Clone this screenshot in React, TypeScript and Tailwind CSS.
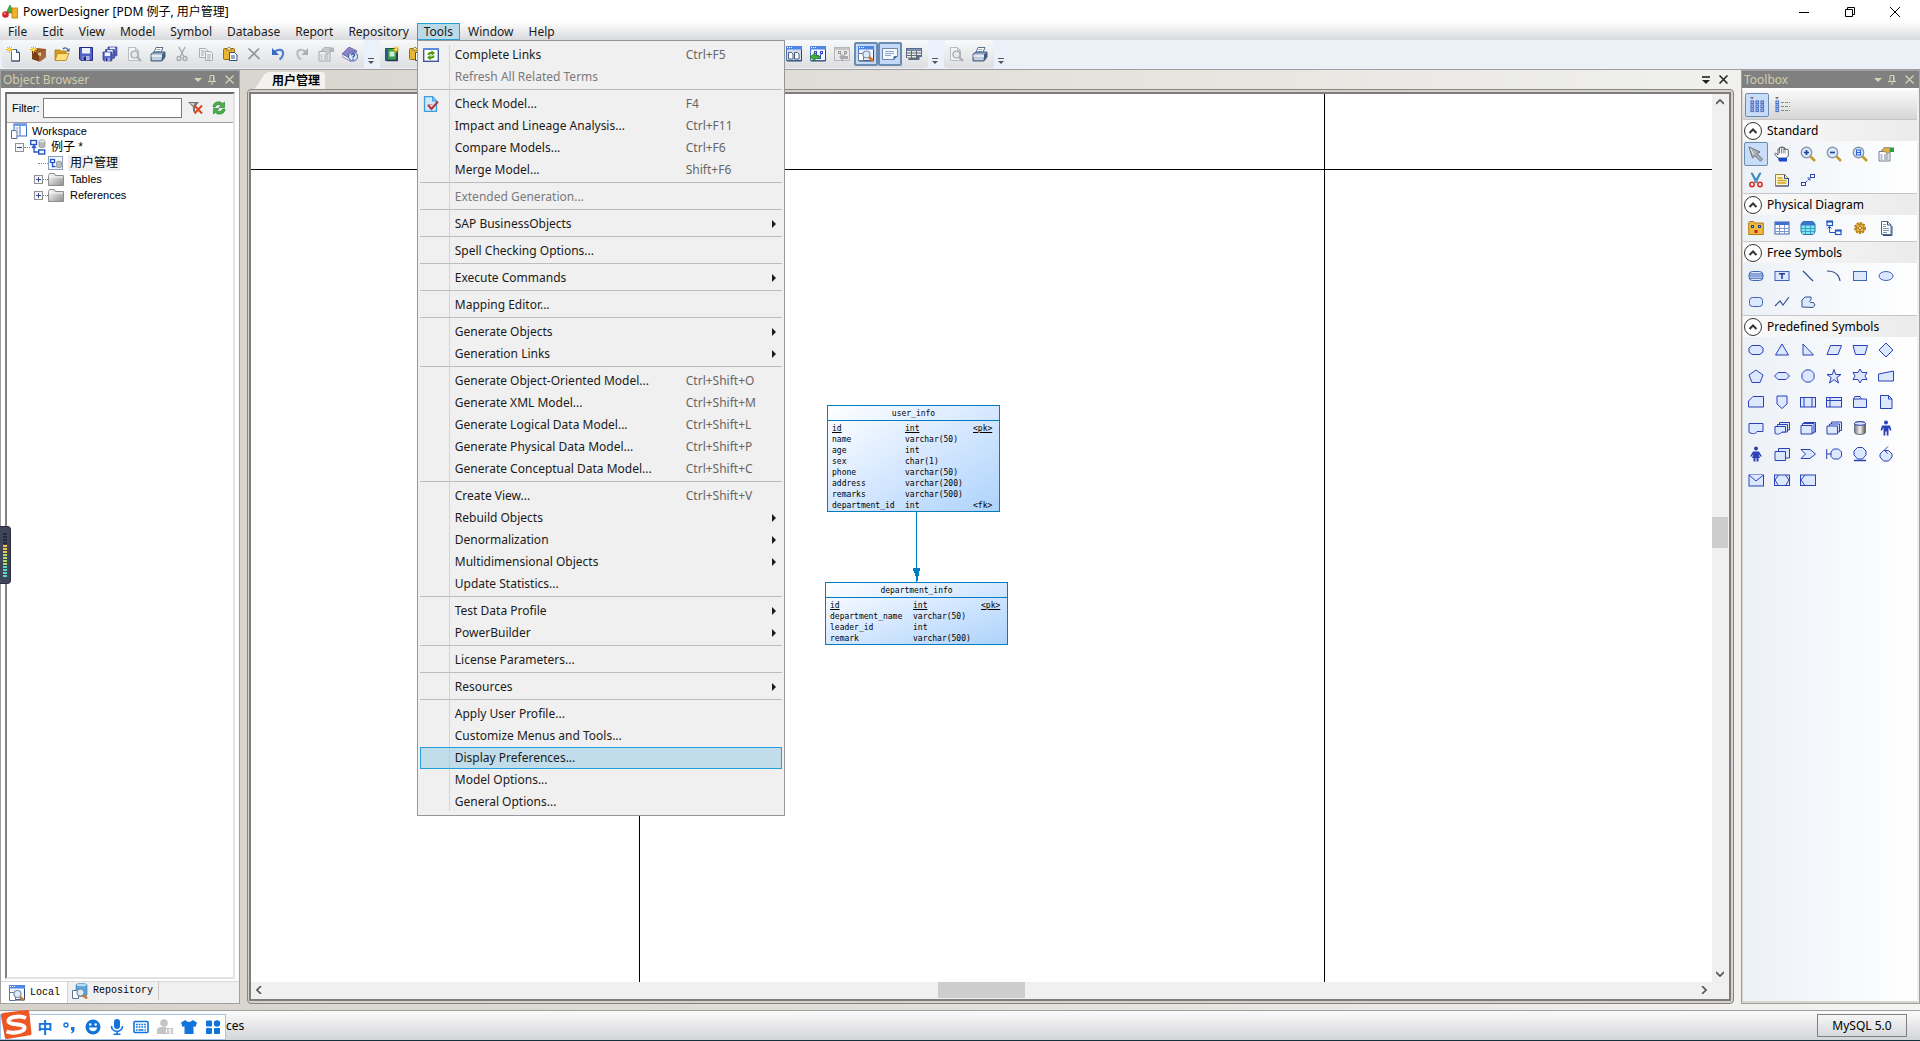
import React from "react";

/* ---------- icon helper ---------- */
const B = "#2a41b8";
const L = "#dbe8ff";

const icons: Record<string, React.ReactNode> = {
  newDoc: (
    <>
      <path d="M5.5 3.500h5l3 3v8.500h-8z" fill="#fff" stroke="#5b7596" />
      <path d="M10.500 3.500v3h3" fill="#cfdcec" stroke="#2c4a72" />
      <path d="M13.500 7v8h-8" fill="none" stroke="#2c4a72" />
      <Spark />
    </>
  ),
  newBox: (
    <>
      <path d="M2 5l5-3 9 1v8l-6 4.500-8-2.500z" fill="#9a5a2a" />
      <path d="M2 5l7 2.500v8l-7-2.500z" fill="#7a3f18" />
      <path d="M9 7.500l7-4v7.500l-6 4.500H9z" fill="#a9683a" />
      <path d="M7.500 7l3.500-.8v4l-2.500-1z" fill="#e9c590" />
      <Spark />
    </>
  ),
  open: (
    <>
      <path d="M1 4h5l1 1h5v9H1z" fill="#d99a1c" stroke="#a87410" strokeWidth=".7" />
      <path d="M3.500 7.500H15l-3 7H1z" fill="#ffdf7a" stroke="#b8811a" strokeWidth=".8" />
      <path d="M9 3c2-2 4-1 5 .8" fill="none" stroke="#3b5e8f" strokeWidth="1.200" />
      <path d="M15.500 2v3.500h-3.500z" fill="#3b5e8f" />
    </>
  ),
  save: <Disk />,
  saveAll: (
    <>
      <g transform="translate(5 0) scale(.68)"><Disk /></g>
      <g transform="translate(2.500 2.500) scale(.68)"><Disk /></g>
      <g transform="translate(0 5) scale(.68)"><Disk /></g>
    </>
  ),
  preview: (
    <>
      <path d="M2.500 1.500h7l3 3v10h-10z" fill="#f2f3f4" stroke="#b9bcc0" />
      <path d="M9.500 1.500v3h3" fill="none" stroke="#b9bcc0" />
      <circle cx="8.500" cy="8.500" r="3.500" fill="#e6e8ea" stroke="#a2a6ab" strokeWidth="1.200" />
      <path d="M11 11l4 4" stroke="#b0b0b0" strokeWidth="2.400" />
    </>
  ),
  print: (
    <>
      <path d="M6 1.500h7l-2.500 6h-7z" fill="#fff" stroke="#56708f" />
      <path d="M6.500 3.500h4M6 5.500h4" stroke="#9bb0c8" />
      <path d="M1 8l3-2h11v5l-3 4H1z" fill="#8ea4bf" stroke="#2d4868" strokeWidth=".8" />
      <path d="M1.500 8.500H12v3H1.500z" fill="#e3ebf4" />
      <path d="M2 13h9" stroke="#fff" />
      <path d="M12 8.500l3-2.500v5l-3 3.500z" fill="#3e5c80" />
    </>
  ),
  cut: (
    <g fill="none" stroke="#a4a7ab" strokeWidth="1.300">
      <path d="M5 1l4.500 9M11 1L6.500 10" />
      <circle cx="5" cy="12.500" r="2" />
      <circle cx="11" cy="12.500" r="2" />
    </g>
  ),
  copy: (
    <g fill="#f0f1f2" stroke="#a9acb0">
      <path d="M1.500 2.500h6l2 2v7h-8z" />
      <path d="M7.500 5.500h5l2 2v7h-7z" />
      <path d="M3 5h4M3 7h3M3 9h3M9 9h4M9 11h4M9 13h3" fill="none" />
    </g>
  ),
  paste: (
    <>
      <rect x="1.500" y="2.500" width="11" height="11" rx="1" fill="#e9b732" stroke="#9b6c0d" />
      <path d="M4 4V2.500h1.500C6 .8 8 .8 8.500 2.500H10V4z" fill="#fff3b8" stroke="#8a6416" strokeWidth=".8" />
      <path d="M7.500 6.500h5l2.500 2.500v5.500H7.500z" fill="#fff" stroke="#2f4f84" />
      <path d="M9 10h4M9 12h4" stroke="#2f4f84" />
    </>
  ),
  del: <path d="M2.500 2.500l11 10.500M13 2.500L2.500 13" stroke="#909397" strokeWidth="1.700" fill="none" />,
  undo: (
    <>
      <path d="M4 6.500C8 2 14 3.500 13 8.500c-.5 2.500-2 4-3.500 5" fill="none" stroke="#4f7fd6" strokeWidth="2.200" />
      <path d="M2 2v7h7z" fill="#3769c6" />
    </>
  ),
  redo: (
    <>
      <path d="M12 6.500C8 2 2.500 3.500 3.500 8.500c.5 2.500 2 4 3.500 5" fill="none" stroke="#bbbec2" strokeWidth="2.200" />
      <path d="M14 2v7H7.500z" fill="#a9adb1" />
    </>
  ),
  props: <Props c="#a4a6a9" f="#efefef" h="#c7c9cb" g="#b4b6b8" />,
  propsColor: <Props c="#6e7f94" f="#fff" h="#e0ae3f" g="#2f9a4b" />,
  helpBook: (
    <>
      <path d="M0 8l7-7 8 4-6 8z" fill="#8a83c4" stroke="#5b5398" strokeWidth=".7" />
      <path d="M0 8l9 5v2.500L0 10.500z" fill="#fff" stroke="#5b5398" strokeWidth=".7" />
      <circle cx="11" cy="10.500" r="4.500" fill="#dce6f8" stroke="#3b5ca6" />
      <path d="M9.500 9.200c0-2 3-2 3-.2 0 1.200-1.500 1.200-1.500 2.500M11 12.500v1.200" stroke="#2744a0" fill="none" strokeWidth="1.300" />
    </>
  ),
  greenBook: (
    <>
      <path d="M1.500 2.500h12v12h-12z" fill="#3c9a52" stroke="#1d5a30" />
      <path d="M1.500 2.500h2.500v12H1.500z" fill="#2a5f8a" />
      <path d="M5.500 5.500h5v5h-5z" fill="#c9efcf" />
      <path d="M13 3v11.500H3" stroke="#1e3556" fill="none" strokeWidth="1.500" />
      <g transform="translate(8.500 0)"><Spark /></g>
    </>
  ),
  winDocs: (
    <>
      <Win />
      <path d="M2.500 6.500h3l1.500 1.500v5H2.500zM8.500 6.500h3l1.500 1.500v5H8.500z" fill="#fff" stroke="#4b607c" />
    </>
  ),
  winLayout: (
    <>
      <Win light />
      <g fill="#dfe4ff" stroke="#3544c0"><rect x="4.500" y="5.500" width="2" height="2" /><rect x="10.500" y="5.500" width="2" height="2" /><rect x="8.500" y="10.500" width="2" height="2" /><path d="M6 8l3 3M11 8l-1 3" /></g>
      <path d="M0 11l5-4v2.500h4v3H5V15z" fill="#3fae3a" stroke="#1a6f1c" strokeWidth=".7" />
    </>
  ),
  winLayoutGray: (
    <>
      <rect x=".5" y="1.500" width="15" height="13" fill="#e9e9e9" stroke="#b5b7b9" />
      <path d="M1 2h14v2H1z" fill="#c4c6c8" />
      <g fill="#eee" stroke="#999"><rect x="4.500" y="5.500" width="2" height="2" /><rect x="10.500" y="5.500" width="2" height="2" /><path d="M6 8l3 3M11 8l-2 3" /></g>
      <path d="M5 11l4-3v2h5v3H9v2.500z" fill="#aaa" />
    </>
  ),
  winFind: (
    <>
      <Win light />
      <path d="M.5 7.500h5v7h-5z" fill="#fff" stroke="#6b7c92" />
      <circle cx="8.500" cy="8.500" r="3.500" fill="#dceaf9" stroke="#7c8da3" strokeWidth="1.200" />
      <path d="M11 11l4 4" stroke="#d57a20" strokeWidth="2.600" />
    </>
  ),
  note: (
    <>
      <path d="M.5 2.500h15v8h-3v3h-12z" fill="#f5f9ff" stroke="#7187a8" />
      <path d="M15.500 10.500h-4v3z" fill="#3d5b8a" />
      <path d="M3 5.500h9M3 7.500h9M3 9.500h6" stroke="#8fa6c8" />
    </>
  ),
  tableNote: (
    <>
      <path d="M0 2h16v9h-2.500v3H2.500v-2H0z" fill="#5b6b82" />
      <path d="M1 3h14v1.500H1z" fill="#7f98bc" />
      <g fill="#f1ecdc"><path d="M1 5h4v1.500H1zM6 5h4v1.500H6zM11 5h4v1.500h-4zM1 7.500h4V9H1zM6 7.500h4V9H6zM11 7.500h4V9h-4zM1 10h4v1.500H1zM6 10h4v1.500H6z" /></g>
    </>
  ),
  filterOff: (
    <>
      <path d="M0 2h11L7 7v6l-2-2V7z" fill="#6f7276" />
      <path d="M2 3h5L5.500 6z" fill="#c8cacc" />
      <path d="M6.500 5.500l7.500 8M14 5.500l-7.500 8" stroke="#e2421e" strokeWidth="2" />
    </>
  ),
  refresh: (
    <g fill="#4bb04a" stroke="#1c7a2d" strokeWidth=".6">
      <path d="M2 7C2 1.500 9 .5 11.500 3.500L13.500 2v5.500H8l1.800-2C8 4 5 4.500 4.500 7z" />
      <path d="M14 9c0 5.500-7 6.500-9.500 3.500L2.500 14V8.500H8l-1.800 2C8 12 11 11.500 11.500 9z" />
    </g>
  ),
  workspace: (
    <>
      <rect x="3" y="1" width="12.500" height="12" fill="#fff" stroke="#3c6fd0" />
      <path d="M2.500 .5h13.500v2.500H2.500z" fill="#6f9be6" />
      <path d="M9 3v10" stroke="#3c6fd0" />
      <path d="M4.500 5h3M4.500 7h3M4.500 9h3" stroke="#8aa4c8" />
      <path d="M.5 7.500h4l1.500 2v6H.5z" fill="#fff" stroke="#53709a" />
    </>
  ),
  pdm: (
    <>
      <rect x=".7" y="1.500" width="5.800" height="4" fill="#fff" stroke="#2356c8" strokeWidth="1.400" />
      <path d="M4 6v7h4.500M2 9l2-2.500L6 9" stroke="#2356c8" fill="none" strokeWidth="1.300" />
      <path d="M9 2c0-1.500 6-1.500 6 0v5.500c0 1.500-6 1.500-6 0z" fill="#b9babb" stroke="#868788" strokeWidth=".7" />
      <ellipse cx="12" cy="2.200" rx="3" ry="1" fill="#e6e6e6" />
      <rect x="8.700" y="11" width="6" height="4" fill="#fff" stroke="#2356c8" strokeWidth="1.400" />
    </>
  ),
  diagram: (
    <>
      <rect x=".5" y="1.500" width="14" height="13" fill="#f4f8ff" stroke="#8d9fbc" />
      <rect x="2.500" y="4.500" width="4" height="3" fill="#fff" stroke="#2356c8" strokeWidth="1.300" />
      <path d="M4.500 8v3.500h3" stroke="#2356c8" fill="none" strokeWidth="1.300" />
      <path d="M8.500 7c0-1 5-1 5 0v5c0 1-5 1-5 0z" fill="#bbb" stroke="#7e7e7e" strokeWidth=".6" />
    </>
  ),
  folder: (
    <>
      <path d="M.5 4.500l1-2h5l1 2h8v10H.5z" fill="url(#folderGrad)" stroke="#8e8e8e" />
      <path d="M1 6h14" stroke="#fafafa" />
    </>
  ),
  localTab: (
    <>
      <Win light />
      <path d="M.5 7.500h4l2 2v6h-6z" fill="#fff" stroke="#5a7699" />
      <circle cx="8.500" cy="9" r="3.500" fill="#dceaf9" stroke="#7c8da3" strokeWidth="1.200" />
      <path d="M11 12l4 3.500" stroke="#c9792a" strokeWidth="2.400" />
    </>
  ),
  repoTab: (
    <>
      <path d="M4 2c0-2 11-2 11 0v10c0 2-11 2-11 0z" fill="#58a6dc" stroke="#3277ae" strokeWidth=".6" />
      <ellipse cx="9.500" cy="2" rx="5" ry="1.300" fill="#b8dcf5" />
      <path d="M.5 7.500h4l2 2v6h-6z" fill="#fff" stroke="#5a7699" />
      <circle cx="8.500" cy="9.500" r="3.500" fill="#dceaf9" stroke="#7c8da3" strokeWidth="1.200" />
      <path d="M11 12l4 3.500" stroke="#c9792a" strokeWidth="2.400" />
    </>
  ),
  links: (
    <>
      <rect x=".7" y="1.700" width="14.600" height="12.600" fill="#fff" stroke="#3d5a94" strokeWidth="1.400" />
      <path d="M0 2h16" stroke="#5b8be0" strokeWidth="2" />
      <path d="M4.500 8C4.500 5.500 6 4.800 8.500 4.800V3.300L12 6 8.500 8.700V7C7 7 6.500 7.200 6.500 8z" fill="#4f9a12" />
      <path d="M11.500 8.500c0 2.500-1.500 3.200-4 3.200v1.600L4 10.500l3.500-2.700v1.700c1.500 0 2-.2 2-1z" fill="#4f9a12" />
    </>
  ),
  check: (
    <>
      <path d="M1.500 .7h8l4 4v10.600h-12z" fill="#cfe8fa" stroke="#3f9bdc" strokeWidth="1.300" />
      <path d="M9.500 1v4h4" fill="#8cc8f0" stroke="#3f9bdc" />
      <path d="M5 9l3.500 4L15 5.500" stroke="#b8323c" strokeWidth="2" fill="none" />
      <path d="M4.500 8.500h5" stroke="#d98a90" />
    </>
  ),
  gridSmall: (
    <>
      <path d="M1 0h4L3 2.500z" fill="#777" />
      {[5, 9, 13].map((y) => [3, 8, 13].map((x) => <rect key={`${x}-${y}`} x={x - 1} y={y - 1} width="2.500" height="2.500" fill="#f3c3cf" stroke="#4d77c8" strokeWidth="1.200" />))}
    </>
  ),
  gridList: (
    <>
      <path d="M1 0h4L3 2.500z" fill="#777" />
      {[5, 9, 13].map((y) => <g key={y}><rect x="2" y={y - 1} width="2.500" height="2.500" fill="#dce9ff" stroke="#4d77c8" strokeWidth="1.200" /><path d={`M7 ${y + 0.5}h9`} stroke="#888" strokeDasharray="3 1" /></g>)}
    </>
  ),
  pointer: (
    <>
      <path d="M1 1l11 5-3.200 1.600 5.700 5.400-2 2.200-5.500-5.500L4.500 12z" fill="#aeb1b5" stroke="#62666c" strokeWidth=".9" />
      <path d="M2.500 2.500l3 6" stroke="#eee" />
    </>
  ),
  hand: (
    <>
      <path d="M4 12L.8 8.500c-.5-1 .7-1.500 1.400-1L4 9V3.500c0-1 1.500-1 1.500 0V2c0-1 1.700-1 1.700 0v-.5c0-1 1.700-1 1.700 0V2c0-1 1.700-1 1.700 0v1.500c0-1 1.700-1 1.700 0V4c.3-1 2-1 2 .2V10l-2 2z" fill="#fff" stroke="#333" strokeWidth=".8" />
      <path d="M5.500 3v4.500M7.400 2v5.500M9.200 2v5.500M11 3v4.500" stroke="#555" strokeWidth=".7" />
      <path d="M4 12h9v3.500H5z" fill="#1746d0" />
    </>
  ),
  zoomIn: <Mag><path d="M4 6.500h5M6.500 4v5" stroke="#1f4396" strokeWidth="1.700" /></Mag>,
  zoomOut: <Mag><path d="M4 6.500h5" stroke="#1f4396" strokeWidth="1.700" /></Mag>,
  zoomFit: <Mag><path d="M4.500 4h4v5h-4zM4.500 6.500h4" stroke="#2b5ee0" strokeWidth="1.100" fill="none" /></Mag>,
  cutColor: (
    <>
      <path d="M3 1h1.500l5 9L8 11zM13 1h-1.500L6.500 10 8 11z" fill="#3e93d0" stroke="#2a6fa8" strokeWidth=".6" />
      <circle cx="4" cy="12.500" r="2.200" fill="none" stroke="#e02a1a" strokeWidth="1.500" />
      <circle cx="12" cy="12.500" r="2.200" fill="none" stroke="#e02a1a" strokeWidth="1.500" />
    </>
  ),
  noteYellow: (
    <>
      <path d="M1.500 2.500h9l4 4v7.500h-13z" fill="#fff7d0" stroke="#a48322" />
      <path d="M10.500 2.500v4h4M14.500 6v8h-13" fill="none" stroke="#2a49a0" />
      <path d="M3.500 6h5M3.500 8.500h9M3.500 11h9" stroke="#d3a21c" strokeWidth="1.300" />
    </>
  ),
  linkTool: (
    <g fill="#fff" stroke={B}><rect x="1.500" y="10.500" width="4" height="3" /><rect x="10.500" y="2.500" width="4" height="3" /><path d="M6 10l4-4M7.500 6h2.500v2.500" fill="none" strokeDasharray="2 1" /></g>
  ),
  pkg: (
    <>
      <path d="M.7 3l1-1.500h4l1 1.500h8.600v11.500H.7z" fill="#f0b93a" stroke="#a5700f" strokeWidth=".9" />
      <path d="M3 5h3v3H3zM10 5h3v3h-3z" fill="#24439a" /><path d="M6.500 10h3v3h-3z" fill="#c2222e" /><path d="M4 6h1v1H4zM11 6h1v1h-1z" fill="#5be0e6" />
    </>
  ),
  tbl: (
    <>
      <rect x="1" y="2" width="14" height="12" fill="#fff" stroke="#3f62ae" /><path d="M1 2h14v3H1z" fill="#3f6fd0" />
      <path d="M1 8.500h14M1 11.500h14M5.500 5v9M10.500 5v9" stroke="#7c98cf" />
    </>
  ),
  view: (
    <>
      <path d="M1 4l2-2.500h10L15 4v8l-2 2.500H3L1 12z" fill="#7ee8f0" stroke="#2f6fb4" /><path d="M1 4l2-2.500h10L15 4v1.500H1z" fill="#3a76cc" />
      <path d="M1 8.500h14M1 11.500h14M5.500 5v9M10.500 5v9" stroke="#3f9fc8" />
    </>
  ),
  ref: (
    <>
      <rect x="1" y="1.500" width="5.500" height="4" fill="#fff" stroke="#2356c8" strokeWidth="1.200" /><rect x="9.500" y="10.500" width="5.500" height="4" fill="#fff" stroke="#2356c8" strokeWidth="1.200" />
      <path d="M.5 1.500h6.500M9 10.500h6.500" stroke="#2356c8" strokeWidth="1.800" /><path d="M3.500 6v6.500H9M1.500 8.500l2-2 2 2" stroke="#2356c8" fill="none" />
    </>
  ),
  gear: (
    <>
      <circle cx="8" cy="8" r="5.200" fill="#f3c24e" stroke="#b07a14" strokeWidth="1.600" strokeDasharray="2.200 1.200" /><circle cx="8" cy="8" r="4" fill="#f3c24e" stroke="#b07a14" strokeWidth=".8" />
      <circle cx="8" cy="8" r="1.500" fill="#fff" stroke="#a06c10" /><path d="M8 4v2M8 10v2M4 8h2M10 8h2" stroke="#a06c10" />
    </>
  ),
  file: (
    <>
      <path d="M3.500 1.500h6l3.500 3.500v9.500H3.500z" fill="#fff" stroke="#4e678c" /><path d="M9.500 1.500V5H13" fill="none" stroke="#2d4d7d" />
      <path d="M5 4.500h3M5 6.500h3M5 8.500h6M5 10.500h6M5 12.500h4" stroke="#8596b0" /><path d="M14 6v9.500H5" fill="none" stroke="#2d4d7d" />
    </>
  ),
  fRoundTitle: <g fill={L} stroke="#3f63b5"><rect x="1" y="3.500" width="14" height="9" rx="3.500" /><path d="M1 6h14M1 8h14M1 10.200h14" /></g>,
  fText: <><rect x="1" y="3.500" width="14" height="9" fill={L} stroke="#3f63b5" /><path d="M5 5.800h6M8 5.500v5.500" stroke="#1f3c90" strokeWidth="1.500" /></>,
  fLine: <path d="M3 3l10 10" stroke="#33508f" strokeWidth="1.200" />,
  fArc: <path d="M1 3c7 0 12 3 13 10" stroke="#33508f" strokeWidth="1.200" fill="none" />,
  fRect: <rect x="1.500" y="3.500" width="13" height="9" fill={L} stroke="#3f63b5" />,
  fEllipse: <ellipse cx="8" cy="8" rx="7" ry="4.500" fill={L} stroke="#3f63b5" />,
  fRound: <rect x="1.500" y="3.500" width="13" height="9" rx="3" fill={L} stroke="#3f63b5" />,
  fPoly: <path d="M1 12l5-5 3 4 6-8" stroke="#33508f" strokeWidth="1.200" fill="none" />,
  fClosed: <path d="M2 13V6l3-3h6v3c-2 1-2 2 0 2.500h2.500L15 11l-2 2.500z" fill={L} stroke="#33508f" />,
  s1: <path d="M4 3.500h8L15 6v4l-3 2.500H4L1 10V6z" fill={L} stroke={B} />,
  s2: <path d="M8 2l6.500 11h-13z" fill={L} stroke={B} />,
  s3: <path d="M3 2v11h10.500z" fill={L} stroke={B} />,
  s4: <path d="M4.500 3.500h11l-3.500 9H1z" fill={L} stroke={B} />,
  s5: <path d="M1 3.500h14.500l-2.500 9H3.500z" fill={L} stroke={B} />,
  s6: <path d="M8 1l7 7-7 7-7-7z" fill={L} stroke={B} />,
  s7: <path d="M8 2l7 5-3 7.500H4L1 7z" fill={L} stroke={B} />,
  s8: <path d="M4 4.500h8L15.500 8 12 11.500H4L.5 8z" fill={L} stroke={B} />,
  s9: <path d="M5.500 2h5L14 5.500v5L10.500 14h-5L2 10.500v-5z" fill={L} stroke={B} />,
  s10: <path d="M8 1.500l1.700 5h5.300l-4.200 3 1.700 5.500L8 11.700 3.500 15l1.700-5.500L1 6.500h5.300z" fill={L} stroke={B} />,
  s11: <path d="M8 1l2 3.500h5L13 8l2 3.500h-5L8 15l-2-3.500H1L3 8 1 4.500h5z" fill={L} stroke={B} />,
  s12: <path d="M.5 6l15-3v10H.5z" fill={L} stroke={B} />,
  s13: <path d="M5 2.500h10.500v10.500H.5V7z" fill={L} stroke={B} />,
  s14: <path d="M3 2h10v8l-5 4.500L3 10z" fill={L} stroke={B} />,
  s15: <g fill={L} stroke={B}><rect x=".5" y="3.500" width="15" height="9.500" /><path d="M4 3.500V13M12 3.500V13" /></g>,
  s16: <g fill={L} stroke={B}><rect x=".5" y="3.500" width="15" height="9.500" /><path d="M.5 6.500h15M4 3.500V13" /></g>,
  s17: <path d="M1.500 13.500V5L3 2.500h5L9.500 5h5v8.500zM1.500 5h8" fill={L} stroke={B} />,
  s18: <path d="M2.500 1.500h8l3.500 3.500v9.500H2.500zM10.500 1.500V5H14" fill={L} stroke={B} />,
  s19: <path d="M1 3.500h14v8H9c-1 2-3 3-8 1z" fill={L} stroke={B} />,
  s20: <g fill={L} stroke={B}><path d="M5.500 2.500h10V10h-10z" /><path d="M3.500 4.500h10V12h-10z" /><path d="M1 6.500h10.500V12H8c-2 2.500-5 2.500-7 1.500z" /></g>,
  s21: <g fill={L} stroke={B}><path d="M4 2.500h11.500V12H4z" /><path d="M2.500 3.500H14V13H2.500z" /><path d="M1 5.500h11v8.500H1z" /></g>,
  s22: <g fill={L} stroke={B}><path d="M5.500 2h10v8.500h-10z" /><path d="M3.500 4h10v8h-10z" /><path d="M1 6h10.500v8H1z" /></g>,
  s23: <><path d="M2.500 3.500c0-2.500 11-2.500 11 0v9c0 2.500-11 2.500-11 0z" fill="url(#cylGrad)" stroke="#666b85" /><ellipse cx="8" cy="3.500" rx="5.500" ry="1.800" fill="#dde4f7" stroke={B} /></>,
  s24: <><circle cx="8" cy="2.500" r="2" fill={B} /><path d="M4 5.500h8l1.500 5H12L10.500 7.500v8H8.700v-4H7.300v4H5.500v-8L4 10.500H2.500z" fill={B} /></>,
  s25: <><circle cx="8" cy="2.500" r="2" fill={B} /><path d="M5 5.500h6l3 5h-1.500L10.500 8l1.500 4h-1.500v3.500h-2V12h-1v3.500h-2V12H4l1.500-4-2 2.500H2z" fill={B} /></>,
  s26: <g fill={L} stroke={B}><path d="M4.500 2.500h11V12h-11z" /><path d="M1 5.500h10.500v9H1z" /></g>,
  s27: <path d="M1 3.500h9L15.500 8 10 12.500H1L5.500 8z" fill={L} stroke={B} />,
  s28: <g fill={L} stroke={B}><path d="M.7 3v10M1 8h4" /><path d="M7.500 3h5L15.500 6v4.500L12.500 13h-5L5 10.500V6z" /></g>,
  s29: <g fill={L} stroke={B}><path d="M5.500 1.500h5L14 5v4l-3.500 4h-5L2 9V5z" /><path d="M2 14.500h12" strokeWidth="1.500" /></g>,
  s30: <g fill={L} stroke={B}><path d="M5.500 4.500h5L14 8v3l-3.500 4h-5L2 11V8z" /><path d="M10 .5L6.500 4l3 3.500" fill="none" /></g>,
  s31: <g fill={L} stroke={B}><rect x="1" y="3" width="14.500" height="11" /><path d="M1 3l7 6 7.500-6" /></g>,
  s32: <g fill={L} stroke={B}><rect x=".5" y="3" width="15" height="10.500" /><path d="M4.500 3L1 8l3.500 5.500M11.500 3L15 8l-3.500 5.500" /></g>,
  s33: <g fill={L} stroke={B}><rect x=".5" y="3" width="15" height="10.500" /><path d="M5 3L1 8l4 5.500" /></g>,
};

function Spark() {
  return (
    <g stroke="#f0b90b" strokeWidth="1">
      <path d="M3.500 0v7M0 3.500h7M1 1l5 5M6 1L1 6" />
      <rect x="2.500" y="2.500" width="2" height="2" fill="#fff6b0" stroke="none" />
    </g>
  );
}
function Disk() {
  return (
    <>
      <path d="M1.500 1.500h13v13H3l-1.500-1.500z" fill="#5261c4" stroke="#232b82" />
      <path d="M4 2h8v5.500H4z" fill="#eef2ff" />
      <path d="M4.500 10h7v4.500h-7z" fill="#aab4e6" />
      <path d="M5.500 10.500H8v4H5.500z" fill="#1e2568" />
    </>
  );
}
function Props({ c, f, h, g }: { c: string; f: string; h: string; g: string }) {
  return (
    <>
      <path d="M1 5.500h11v9.500H1z" fill={f} stroke={c} />
      <path d="M2.500 9h2M6 9h4.500M2.500 11h2M6 11h4.500M2.500 13h2M6 13h4.500" stroke={c} />
      <path d="M3 5l3-3.500h6v4.500L9 8 7.500 6z" fill={h} stroke={c} strokeWidth=".7" />
      <path d="M12 1.500h4V6h-4z" fill={g} />
    </>
  );
}
function Win({ light }: { light?: boolean }) {
  return (
    <>
      <rect x=".5" y=".5" width="15" height="14" fill={light ? "#f3f7ff" : "#d4dceb"} stroke="#4f75b8" />
      <path d="M0 0h16v3.500H0z" fill="#4f86e6" />
      <path d="M1 1.500h1M3 1.500h1M5 1.500h1" stroke="#fff" />
      <path d="M15.500 4v11H1" stroke="#2c4770" fill="none" />
    </>
  );
}
function Mag({ children }: { children: React.ReactNode }) {
  return (
    <>
      <circle cx="6.500" cy="6.500" r="5.200" fill="#dbe9fb" stroke="#8a97a9" strokeWidth="1.400" />
      {children}
      <path d="M10.500 10.500l4.500 4.500" stroke="#c79a2a" strokeWidth="2.600" />
    </>
  );
}

function Icon({ n }: { n: string }) {
  return (
    <svg viewBox="0 0 16 16" className="h-4 w-4 shrink-0" aria-hidden="true">
      {icons[n]}
    </svg>
  );
}

/* ---------- data ---------- */
type Item = { t: string; k?: string; sub?: boolean; off?: boolean; icon?: string; hot?: boolean };
const menuGroups: Item[][] = [
  [{ t: "Complete Links", k: "Ctrl+F5", icon: "links" }, { t: "Refresh All Related Terms", off: true }],
  [
    { t: "Check Model...", k: "F4", icon: "check" },
    { t: "Impact and Lineage Analysis...", k: "Ctrl+F11" },
    { t: "Compare Models...", k: "Ctrl+F6" },
    { t: "Merge Model...", k: "Shift+F6" },
  ],
  [{ t: "Extended Generation...", off: true }],
  [{ t: "SAP BusinessObjects", sub: true }],
  [{ t: "Spell Checking Options..." }],
  [{ t: "Execute Commands", sub: true }],
  [{ t: "Mapping Editor..." }],
  [{ t: "Generate Objects", sub: true }, { t: "Generation Links", sub: true }],
  [
    { t: "Generate Object-Oriented Model...", k: "Ctrl+Shift+O" },
    { t: "Generate XML Model...", k: "Ctrl+Shift+M" },
    { t: "Generate Logical Data Model...", k: "Ctrl+Shift+L" },
    { t: "Generate Physical Data Model...", k: "Ctrl+Shift+P" },
    { t: "Generate Conceptual Data Model...", k: "Ctrl+Shift+C" },
  ],
  [
    { t: "Create View...", k: "Ctrl+Shift+V" },
    { t: "Rebuild Objects", sub: true },
    { t: "Denormalization", sub: true },
    { t: "Multidimensional Objects", sub: true },
    { t: "Update Statistics..." },
  ],
  [{ t: "Test Data Profile", sub: true }, { t: "PowerBuilder", sub: true }],
  [{ t: "License Parameters..." }],
  [{ t: "Resources", sub: true }],
  [
    { t: "Apply User Profile..." },
    { t: "Customize Menus and Tools..." },
    { t: "Display Preferences...", hot: true },
    { t: "Model Options..." },
    { t: "General Options..." },
  ],
];

const menus = ["File", "Edit", "View", "Model", "Symbol", "Database", "Report", "Repository", "Tools", "Window", "Help"];

const sections = [
  { title: "Standard", icons: ["pointer", "hand", "zoomIn", "zoomOut", "zoomFit", "propsColor", "cutColor", "noteYellow", "linkTool"] },
  { title: "Physical Diagram", icons: ["pkg", "tbl", "view", "ref", "gear", "file"] },
  { title: "Free Symbols", icons: ["fRoundTitle", "fText", "fLine", "fArc", "fRect", "fEllipse", "fRound", "fPoly", "fClosed"] },
  { title: "Predefined Symbols", icons: Array.from({ length: 33 }, (_, i) => `s${i + 1}`) },
];

type Row = [string, string, string];
const userRows: Row[] = [
  ["id", "int", "<pk>"],
  ["name", "varchar(50)", ""],
  ["age", "int", ""],
  ["sex", "char(1)", ""],
  ["phone", "varchar(50)", ""],
  ["address", "varchar(200)", ""],
  ["remarks", "varchar(500)", ""],
  ["department_id", "int", "<fk>"],
];
const deptRows: Row[] = [
  ["id", "int", "<pk>"],
  ["department_name", "varchar(50)", ""],
  ["leader_id", "int", ""],
  ["remark", "varchar(500)", ""],
];

/* ---------- pieces ---------- */
function ToolsMenu() {
  return (
    <div role="menu" aria-label="Tools" className="absolute top-full left-0 z-30 w-[368px] border border-[#979797] bg-[#f0f0f0] px-[2px] pt-[3px] pb-[2px]">
      <div className="absolute top-[4px] bottom-[4px] left-[31px] w-px bg-[#d5d5d5]" />
      {menuGroups.map((g, gi) => (
        <div key={gi} className={gi > 0 ? "relative mt-px border-t border-[#bdbdbd] pt-[3px]" : "relative"}>
          {g.map((m) => (
            <button
              key={m.t}
              role="menuitem"
              disabled={m.off}
              className={`flex h-[22px] w-full items-center border text-left whitespace-nowrap ${m.hot ? "border-[#26a0da] bg-[#91c9e6]/50" : "border-transparent"} ${m.off ? "text-[#7a7a7a]" : "text-[#1b1b1b]"}`}
            >
              <span className="flex w-[34px] justify-start pl-[2px]">{m.icon && <Icon n={m.icon} />}</span>
              <span className="w-[231px]">{m.t}</span>
              <span className="flex-1 text-[#666]">{m.k}</span>
              {m.sub && (
                <svg viewBox="0 0 4 8" className="mr-[5px] h-2 w-1"><path d="M0 0l4 4-4 4z" fill="#1b1b1b" /></svg>
              )}
            </button>
          ))}
        </div>
      ))}
    </div>
  );
}

function ToolButton({ n, on }: { n: string; on?: boolean }) {
  return (
    <button aria-label={n} className={`flex h-6 w-6 shrink-0 items-center justify-center ${on ? "rounded-[2px] border-2 border-[#6a8cb0] bg-[#c3d9f7]" : ""}`}>
      <Icon n={n} />
    </button>
  );
}

function Overflow() {
  return (
    <button aria-label="Toolbar options" className="flex h-full w-[13px] shrink-0 items-end justify-center bg-[#eaf1fb] pb-[3px]">
      <svg viewBox="0 0 6 7" className="h-[7px] w-[6px]"><path d="M0 .5h6" stroke="#555" /><path d="M0 3h6L3 6z" fill="#555" /></svg>
    </button>
  );
}

function Group({ items, on = [] }: { items: string[]; on?: string[] }) {
  return (
    <div className="flex h-[28px] shrink-0 items-center">
      <div className="flex h-full items-center rounded-[3px] bg-linear-to-b from-[#f8f9fa] to-[#dcdee1] pr-[2px]">
        {items.map((n, i) => <ToolButton key={i} n={n} on={on.includes(n)} />)}
      </div>
      <Overflow />
    </div>
  );
}

function PanelTitle({ children }: { children: string }) {
  return (
    <div className="flex h-[17px] shrink-0 items-center bg-[#808080] pr-[2px] pl-[2px] text-[12px] leading-[17px] text-[#d0ccae]">
      <h2 className="flex-1">{children}</h2>
      <button aria-label="Panel menu" className="flex w-[14px] justify-center"><svg viewBox="0 0 8 4" className="h-1 w-2"><path d="M0 0h8L4 4z" fill="#d8d4b8" /></svg></button>
      <button aria-label="Pin panel" className="flex w-[14px] justify-center"><svg viewBox="0 0 8 10" className="h-[10px] w-2" fill="none" stroke="#d8d4b8"><path d="M2 6V.5h4V6M5.500.5V6M0 6.500h8M4 7v3" /></svg></button>
      <button aria-label="Close panel" className="ml-[2px] flex w-4 justify-center"><svg viewBox="0 0 9 9" className="h-[9px] w-[9px]"><path d="M.5.5l8 8M8.500.5l-8 8" stroke="#d8d4b8" strokeWidth="1.200" /></svg></button>
    </div>
  );
}

function Entity({ title, rows, className, cols }: { title: string; rows: Row[]; className: string; cols: [string, string] }) {
  return (
    <table className={`absolute table-fixed border-separate border-spacing-0 border border-[#007cc3] bg-linear-to-br from-white via-[#d6e8ff] to-[#add3fa] text-left font-[DejaVu_Sans_Mono,monospace] text-[8px] leading-[11px] text-black ${className}`}>
      <colgroup><col className={cols[0]} /><col className={cols[1]} /><col /></colgroup>
      <thead><tr><th colSpan={3} className="h-[15px] border-b border-[#007cc3] text-center font-normal">{title}</th></tr></thead>
      <tbody>
        {rows.map((r, i) => (
          <tr key={r[0]}>
            {r.map((c, j) => (
              <td key={j} className={`h-[11px] whitespace-nowrap ${j === 0 ? "pl-[4px]" : ""} ${i === 0 ? "h-[13px] pt-[2px] underline" : ""}`}>{c}</td>
            ))}
          </tr>
        ))}
      </tbody>
    </table>
  );
}

function Expander({ open }: { open?: boolean }) {
  return (
    <button aria-label={open ? "Collapse" : "Expand"} className="h-[9px] w-[9px] shrink-0">
      <svg viewBox="0 0 9 9" className="h-[9px] w-[9px]"><rect x=".5" y=".5" width="8" height="8" fill="#f7f7f7" stroke="#919191" /><path d={open ? "M2 4.500h5" : "M2 4.500h5M4.500 2v5"} stroke="#33488f" /></svg>
    </button>
  );
}

function Chevron({ d, label }: { d: string; label: string }) {
  return (
    <button aria-label={label} className="flex h-4 w-4 shrink-0 items-center justify-center">
      <svg viewBox="0 0 8 8" className="h-2 w-2"><path d={d} fill="none" stroke="#555" strokeWidth="1.700" /></svg>
    </button>
  );
}

function ImeBar() {
  const c = "#1174dd";
  const cls = "h-4 w-4";
  return (
    <div className="absolute top-[3px] left-0 flex h-[26px] w-[226px] items-center border border-[#a5c3ea] bg-white">
      <svg viewBox="0 0 32 32" className="-mt-[4px] -ml-px h-8 w-8 shrink-0">
        <path d="M3 4L27 1c1 0 2 .5 2.200 2L31.500 24c0 1-.5 2-1.500 2.300L7 30c-1 0-2-.5-2.200-1.500L1 7C1 5 2 4.200 3 4z" fill="#ee5724" />
        <path d="M26 9C19 6 7.500 8 8.500 12.500c1 4 15 1.500 16 6 .8 4.500-11.500 6.500-18 4" fill="none" stroke="#fff" strokeWidth="4" />
      </svg>
      <div className="ml-[5px] flex flex-1 items-center justify-between pr-[4px]">
        <button className="w-4 text-[15px] leading-none font-bold text-[#1174dd]">中</button>
        <svg viewBox="0 0 16 16" className={cls}><circle cx="5" cy="6" r="2" fill="none" stroke={c} strokeWidth="1.400" /><path d="M10 8h3.500v3c0 1.500-1 2.500-3 3.500l-.5-1c1-.7 1.500-1.500 1.300-2.300H10z" fill={c} /></svg>
        <svg viewBox="0 0 16 16" className={cls}><circle cx="8" cy="8" r="7.500" fill={c} /><path d="M4 8.500h8c0 5-8 5-8 0z" fill="#fff" /><circle cx="5.300" cy="5.500" r="1.200" fill="#fff" /><circle cx="10.700" cy="5.500" r="1.200" fill="#fff" /></svg>
        <svg viewBox="0 0 16 16" className={cls}><rect x="5" y="0" width="6" height="10" rx="3" fill={c} /><path d="M2.500 7c0 7 11 7 11 0M8 12v3M4.500 15.200h7" fill="none" stroke={c} strokeWidth="1.600" /></svg>
        <svg viewBox="0 0 16 16" className={cls}><rect x="1" y="2.500" width="14" height="11" rx="1" fill="none" stroke={c} strokeWidth="1.600" /><path d="M3 5.500h10M3 8h10" stroke={c} strokeWidth="1.500" strokeDasharray="1.700 1" /><path d="M3 11h1.500M5.500 11h5M11.500 11h1.500" stroke={c} strokeWidth="1.300" /></svg>
        <svg viewBox="0 0 16 16" className={cls}><circle cx="7" cy="4" r="3.800" fill="#c4c4c4" /><path d="M0 15V11c0-2 2-3 4-3h5v7z" fill="#c4c4c4" /><rect x="8" y="9" width="8" height="6" fill="#c4c4c4" /><path d="M9.500 10v4M14.500 10.500h-2.500v1.500h2v2h-2.500" stroke="#fff" fill="none" /></svg>
        <svg viewBox="0 0 16 16" className={cls}><path d="M4.500 1C6 3.500 10 3.500 11.500 1L16 3.500 14.500 8l-2-.8V15h-9V7.200l-2 .8L0 3.500z" fill={c} /></svg>
        <svg viewBox="0 0 16 16" className={cls}><g fill={c}><rect x="1" y="1.500" width="6" height="6" rx="1" /><circle cx="12" cy="4.500" r="3.200" /><rect x="1" y="9" width="6" height="6" rx="1" /><rect x="9" y="9" width="6" height="6" rx="1" /></g></svg>
      </div>
    </div>
  );
}

export default function App() {
  return (
    <div className="flex h-screen min-h-[860px] flex-col overflow-hidden bg-[#ecf0f7] font-['Noto_Sans','Noto_Sans_CJK_SC',sans-serif] text-[12px] leading-[16px] text-[#1b1b1b]">
      <svg className="absolute h-0 w-0" aria-hidden="true">
        <defs>
          <linearGradient id="folderGrad" x1="0" y1="0" x2="1" y2="1"><stop offset="0" stopColor="#fff" /><stop offset="1" stopColor="#8f8f8f" /></linearGradient>
          <linearGradient id="cylGrad"><stop offset="0" stopColor="#777" /><stop offset=".5" stopColor="#f4f4f4" /><stop offset="1" stopColor="#555" /></linearGradient>
        </defs>
      </svg>

      {/* title bar */}
      <header className="flex h-[23px] shrink-0 items-center bg-white pl-[2px] text-black">
        <svg viewBox="0 0 16 16" className="h-4 w-4"><path d="M8 1l4 8H4z" fill="#3fae3f" stroke="#1d7a24" strokeWidth=".6" /><circle cx="3.500" cy="10.500" r="3.300" fill="#d8232e" /><circle cx="2.700" cy="9.600" r="1" fill="#f4a0a0" /><rect x="10" y="4" width="5.500" height="10" fill="#f3b328" stroke="#c07a10" strokeWidth=".8" /></svg>
        <h1 className="ml-[5px] flex-1">PowerDesigner [PDM 例子, 用户管理]</h1>
        <div className="flex h-full items-center">
          <button aria-label="Minimize" className="flex w-[46px] justify-center"><svg viewBox="0 0 10 10" className="h-[10px] w-[10px]"><path d="M0 5.500h10" stroke="#000" /></svg></button>
          <button aria-label="Restore" className="flex w-[45px] justify-center"><svg viewBox="0 0 10 10" className="h-[10px] w-[10px]" fill="none" stroke="#000"><path d="M.5 2.500h7v7h-7zM2.500 2.500v-2h7v7h-2" /></svg></button>
          <button aria-label="Close" className="mr-[2px] flex w-[46px] justify-center"><svg viewBox="0 0 10 10" className="h-[10px] w-[10px]"><path d="M0 0l10 10M10 0L0 10" stroke="#000" /></svg></button>
        </div>
      </header>

      {/* menu bar */}
      <nav className="flex h-[17px] shrink-0 gap-px bg-linear-to-b from-[#fcfcfc] to-[#d9dadd] pl-px">
        {menus.map((m) =>
          m === "Tools" ? (
            <div key={m} className="relative">
              <button className="h-[17px] border border-[#26a0da] bg-[#bcd9e8] px-[6px] leading-[15px]">{m}</button>
              <ToolsMenu />
            </div>
          ) : (
            <button key={m} className="h-[17px] px-[7px] leading-[17px]">{m}</button>
          ),
        )}
      </nav>

      {/* toolbar */}
      <div className="flex h-[30px] shrink-0 items-start gap-[3px] border-b border-[#a0a0a0] pl-[2px]">
        <Group items={["newDoc", "newBox", "open", "save", "saveAll", "preview", "print", "cut", "copy", "paste", "del", "undo", "redo", "props", "helpBook"]} />
        <Group items={["greenBook", "paste", "cut", "copy", "paste", "undo", "redo", "props", "tbl", "view", "ref", "file", "gear"]} />
        <Group items={["winDocs", "winDocs", "winDocs", "winDocs", "winLayout", "winLayoutGray", "winFind", "note", "tableNote"]} on={["winFind", "note"]} />
        <Group items={["preview", "print"]} />
      </div>

      {/* work area */}
      <main className="relative flex min-h-0 flex-1 bg-linear-to-r from-[#d6d2cb] via-[#e2e0da] to-[#f4f4f2] pb-[6px]">
        <aside className="flex w-[240px] shrink-0 flex-col border border-[#a0a0a0] bg-[#f0f0f0]">
          <PanelTitle>Object Browser</PanelTitle>
          <div className="flex min-h-0 flex-1 flex-col bg-white p-[4px] pb-[2px] font-['Liberation_Sans','Noto_Sans_CJK_SC',sans-serif] text-[11px] text-black">
            <div className="flex min-h-0 flex-1 flex-col border-2 border-t-[#696969] border-r-[#e3e3e3] border-b-[#e3e3e3] border-l-[#808080]">
              <div className="flex h-[29px] shrink-0 items-center border-b border-[#a0a0a0] bg-[#f0f0f0] pl-[5px]">
                <label htmlFor="filter" className="w-[31px]">Filter:</label>
                <input id="filter" className="h-5 w-[139px] border border-[#7a7a7a] bg-white px-1 outline-none" />
                <button aria-label="Clear filter" className="ml-[6px]"><Icon n="filterOff" /></button>
                <button aria-label="Refresh" className="ml-[7px]"><Icon n="refresh" /></button>
              </div>
              <div role="tree" className="flex flex-col leading-[16px]">
                <div role="treeitem" className="flex h-4 items-center gap-[5px] pl-[4px]"><Icon n="workspace" />Workspace</div>
                <div role="treeitem" className="flex h-4 items-center pl-[8px]"><Expander open /><span className="w-[6px] border-t border-dotted border-[#888]" /><Icon n="pdm" /><span className="ml-[5px] text-[12px]">例子 *</span></div>
                <div role="treeitem" className="flex h-4 items-center pl-[31px]"><span className="w-[10px] border-t border-dotted border-[#888]" /><Icon n="diagram" /><span className="ml-[4px] bg-[#f0f0f0] px-[2px] text-[12px]">用户管理</span></div>
                {["Tables", "References"].map((t) => (
                  <div role="treeitem" key={t} className="flex h-4 items-center pl-[27px]"><Expander /><span className="w-[5px] border-t border-dotted border-[#888]" /><Icon n="folder" /><span className="ml-[6px]">{t}</span></div>
                ))}
              </div>
            </div>
          </div>
          <div role="tablist" className="flex h-[22px] shrink-0 items-start border-t border-[#d8d8d8] bg-[#f0f0f0] font-['Liberation_Mono',monospace] text-[10px] text-black">
            <button role="tab" aria-selected="true" className="flex h-[21px] w-[67px] items-center gap-[5px] border-r border-[#d0d0d0] bg-white pl-[8px]"><Icon n="localTab" />Local</button>
            <button role="tab" aria-selected="false" className="flex h-[18px] w-[91px] items-center gap-[5px] border-r border-[#c8c8c8] pl-[4px]"><Icon n="repoTab" />Repository</button>
          </div>
        </aside>

        {/* document */}
        <section className="mx-[7px] flex min-w-0 flex-1 flex-col">
          <div className="flex h-[19px] shrink-0 items-end">
            <svg viewBox="0 0 16 17" className="ml-[6px] h-[17px] w-4"><path d="M0 17C7 15 8 1 16 0v17z" fill="#f4f2ee" /></svg>
            <button role="tab" aria-selected="true" className="h-[17px] rounded-tr-[3px] bg-[#f4f2ee] pr-[5px] pl-[3px] text-[12px] leading-[17px] font-bold text-black">用户管理</button>
            <div className="flex h-full flex-1 items-center justify-end gap-[9px] pr-[6px]">
              <button aria-label="Window list"><svg viewBox="0 0 8 8" className="h-2 w-2"><path d="M0 1h8" stroke="#222" strokeWidth="1.600" /><path d="M0 4h8L4 8z" fill="#222" /></svg></button>
              <button aria-label="Close document"><svg viewBox="0 0 9 9" className="h-[9px] w-[9px]"><path d="M.5.5l8 8M8.500.5l-8 8" stroke="#222" strokeWidth="1.500" /></svg></button>
            </div>
          </div>
          <div className="flex min-h-0 flex-1 rounded-[4px] border border-[#858585] bg-[#d6d2cb] p-[2px] pl-px">
            <div className="flex min-w-0 flex-1 flex-col border-2 border-[#7d7d7d] bg-[#f0f0f0]">
              <div className="flex min-h-0 flex-1">
                <div className="relative min-w-0 flex-1 overflow-hidden bg-white">
                  <div className="absolute top-[75px] right-0 left-0 h-px bg-black" />
                  <div className="absolute top-0 bottom-0 left-[388px] w-px bg-black" />
                  <div className="absolute top-0 bottom-0 left-[1073px] w-px bg-black" />
                  <Entity title="user_info" rows={userRows} className="top-[311px] left-[576px] w-[173px]" cols={["w-[77px]", "w-[68px]"]} />
                  <svg viewBox="0 0 8 70" className="absolute top-[418px] left-[661px] h-[70px] w-2"><path d="M4.500 0v70" stroke="#007cc3" /><path d="M1 56h7v3H7v5H6v5H4v-5H3v-3H2v-2H1z" fill="#007cc3" /></svg>
                  <Entity title="department_info" rows={deptRows} className="top-[488px] left-[574px] w-[183px]" cols={["w-[87px]", "w-[68px]"]} />
                </div>
                <div className="flex w-[17px] shrink-0 flex-col bg-[#f0f0f0]">
                  <Chevron label="Scroll up" d="M0 6l4-4 4 4" />
                  <div className="flex-[406]" />
                  <div className="h-[31px] w-4 bg-[#cdcdcd]" />
                  <div className="flex-[418]" />
                  <Chevron label="Scroll down" d="M0 2l4 4 4-4" />
                </div>
              </div>
              <div className="mr-[17px] flex h-[17px] shrink-0">
                <Chevron label="Scroll left" d="M6 0L2 4l4 4" />
                <div className="flex-[670]" />
                <div className="h-4 w-[87px] bg-[#cdcdcd]" />
                <div className="flex-[670]" />
                <Chevron label="Scroll right" d="M2 0l4 4-4 4" />
              </div>
            </div>
          </div>
        </section>

        {/* toolbox */}
        <aside className="flex w-[179px] shrink-0 flex-col border border-[#a0a0a0] bg-linear-to-r from-[#ecf1f7] to-white">
          <PanelTitle>Toolbox</PanelTitle>
          <div className="flex min-h-0 flex-1 flex-col border-2 border-l border-t-[#fff] border-r-[#f0f0f0] border-b-[#d9d5cd] border-l-[#d9d5cd]">
            <div className="flex h-[29px] shrink-0 items-center gap-px bg-linear-to-b from-[#fafafa] to-[#d6d6d8] pl-[2px]">
              <button aria-label="Icon view" className="flex h-6 w-6 items-center justify-center rounded-[2px] border border-[#6a8cb0] bg-[#c9ddf8]"><Icon n="gridSmall" /></button>
              <button aria-label="List view" className="flex h-6 w-6 items-center justify-center"><Icon n="gridList" /></button>
            </div>
            {sections.map((s) => (
              <section key={s.title}>
                <h3 className="flex h-[22px] items-center gap-[5px] border-t border-[#c6c6c6] bg-linear-to-r from-[#fafafa] to-[#ebebeb] pl-px text-[12px] text-black">
                  <button aria-label={`Collapse ${s.title}`}><svg viewBox="0 0 18 18" className="h-[18px] w-[18px]"><circle cx="9" cy="9" r="8.500" fill="#fff" stroke="#333" /><path d="M5.500 11L9 7.500l3.500 3.500" fill="none" stroke="#333" strokeWidth="2" /></svg></button>
                  {s.title}
                </h3>
                <div className="flex flex-wrap">
                  {s.icons.map((n) => (
                    <button key={n} aria-label={n} className="flex h-[26px] w-[26px] items-center justify-center">
                      <span className={n === "pointer" ? "flex h-6 w-6 items-center justify-center rounded-[2px] border border-[#6a8cb0] bg-[#c9ddf8]" : "flex"}><Icon n={n} /></span>
                    </button>
                  ))}
                </div>
              </section>
            ))}
          </div>
        </aside>

        {/* level meter docked to the screen edge */}
        <div className="absolute top-[456px] left-0 z-20 flex h-[58px] w-[11px] flex-col items-center gap-px rounded-r-[4px] border border-l-0 border-[#2c3040] bg-[#3f4558] py-[6px]">
          {Array.from({ length: 15 }, (_, i) => (
            <span key={i} className={`h-[2px] w-1 shrink-0 ${i < 4 ? "bg-[#262b3a]" : i < 7 ? "bg-[#f0c04a]" : i < 11 ? "bg-[#b5d86a]" : "bg-[#5cd6c0]"}`} />
          ))}
        </div>
      </main>

      {/* status bar */}
      <footer className="relative flex h-[31px] shrink-0 items-center justify-between border-t border-b border-t-[#a0a0a0] border-b-[#14303c] bg-linear-to-b from-[#fbfbfc] to-[#d3d4d6] pr-[13px] pl-[226px] text-black">
        <ImeBar />
        <span>ces</span>
        <span className="flex h-[23px] w-[90px] items-center justify-center border border-[#808080]">MySQL 5.0</span>
      </footer>
    </div>
  );
}
